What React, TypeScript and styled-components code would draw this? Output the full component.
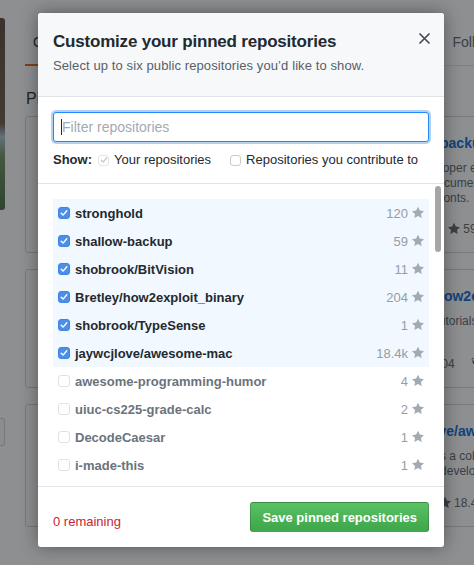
import React from "react"
import styled, { createGlobalStyle } from "styled-components"

interface Repo {
  name: string
  stars: string
  pinned: boolean
}

const repos: Repo[] = [
  { name: "stronghold", stars: "120", pinned: true },
  { name: "shallow-backup", stars: "59", pinned: true },
  { name: "shobrook/BitVision", stars: "11", pinned: true },
  { name: "Bretley/how2exploit_binary", stars: "204", pinned: true },
  { name: "shobrook/TypeSense", stars: "1", pinned: true },
  { name: "jaywcjlove/awesome-mac", stars: "18.4k", pinned: true },
  { name: "awesome-programming-humor", stars: "4", pinned: false },
  { name: "uiuc-cs225-grade-calc", stars: "2", pinned: false },
  { name: "DecodeCaesar", stars: "1", pinned: false },
  { name: "i-made-this", stars: "1", pinned: false },
  { name: "dotfiles", stars: "0", pinned: false },
  { name: "mac-setup", stars: "0", pinned: false },
]

const GlobalStyle = createGlobalStyle`
  html, body {
    margin: 0;
    padding: 0;
  }
  body {
    font-family: "Liberation Sans", Arial, sans-serif;
    color: #24292e;
    overflow: hidden;
  }
  * {
    box-sizing: border-box;
  }
`

/* ---------- background profile page ---------- */

const Page = styled.div`
  position: relative;
  width: 474px;
  height: 565px;
  overflow: hidden;
  background: #fff;
  display: flex;
  gap: 20px;
`

const Sidebar = styled.div`
  width: 5px;
  flex-shrink: 0;
  display: flex;
  flex-direction: column;
  padding-top: 18px;
`

const AvatarEdge = styled.div`
  height: 192px;
  border-radius: 0 3px 3px 0;
  background: linear-gradient(
    180deg,
    #5a4438 0%,
    #6b5346 55%,
    #a9c4cf 62%,
    #6f8f5a 72%,
    #3f6a38 100%
  );
`

const SideButton = styled.div`
  margin-top: 208px;
  height: 28px;
  border: 1px solid #d1d5da;
  border-left: none;
  border-radius: 0 3px 3px 0;
  background: #fafbfc;
`

const Main = styled.div`
  width: 700px;
  flex-shrink: 0;
  display: flex;
  flex-direction: column;
`

const TabBar = styled.nav`
  margin-top: 26px;
  display: flex;
  border-bottom: 1px solid #e1e4e8;
`

const Tab = styled.span<{ $active?: boolean }>`
  padding: 6px 8px 12px;
  margin-right: 12px;
  font-size: 14px;
  line-height: 20px;
  color: ${(p) => (p.$active ? "#24292e" : "#586069")};
  border-bottom: 2px solid ${(p) => (p.$active ? "#e36209" : "transparent")};
  margin-bottom: -1px;
  white-space: nowrap;
`

const Counter = styled.span`
  display: inline-block;
  margin-left: 4px;
  padding: 0 6px;
  font-size: 12px;
  line-height: 18px;
  border-radius: 20px;
  background: rgba(27, 31, 35, 0.08);
`

const PinnedTitle = styled.h2`
  margin: 23px 0 0 1px;
  font-size: 16px;
  font-weight: 400;
  line-height: 20px;
`

const CardGrid = styled.div`
  margin-top: 7px;
  display: grid;
  grid-template-columns: 326px 326px;
  grid-template-rows: 137px 119px 123px;
  gap: 16px;
`

const Card = styled.div`
  border: 1px solid #d1d5da;
  border-radius: 3px;
  padding: 16px;
  display: flex;
  flex-direction: column;
`

const CardTitle = styled.span`
  color: #0366d6;
  font-weight: 700;
  font-size: 14px;
  line-height: 20px;
  white-space: nowrap;
`

const CardDesc = styled.p`
  margin: 8px 0 0;
  font-size: 12px;
  line-height: 15px;
  color: #586069;
  white-space: nowrap;
`

const CardFooter = styled.div`
  margin-top: auto;
  display: flex;
  align-items: center;
  font-size: 12px;
  line-height: 12px;
  color: #586069;
  white-space: nowrap;
`

const FooterItem = styled.span`
  display: inline-flex;
  align-items: center;
  gap: 3px;
  margin-right: 16px;
`

const LangDot = styled.span<{ $color: string }>`
  width: 8px;
  height: 8px;
  border-radius: 50%;
  background: ${(p) => p.$color};
`

/* ---------- modal ---------- */

const Overlay = styled.div`
  position: absolute;
  inset: 0;
  background: rgba(27, 31, 35, 0.5);
  padding: 13px 0 0 38px;
`

const Modal = styled.div`
  position: relative;
  width: 406px;
  height: 534px;
  background: #fff;
  border-radius: 3px;
  box-shadow: 0 0 18px rgba(0, 0, 0, 0.4);
  display: flex;
  flex-direction: column;
  overflow: hidden;
`

const ModalHeader = styled.div`
  height: 84px;
  padding: 18px 15px 0;
  background: #f6f8fa;
  border-bottom: 1px solid #e1e4e8;
`

const ModalTitle = styled.h3`
  margin: 0;
  font-size: 17px;
  font-weight: 700;
  line-height: 22px;
  letter-spacing: -0.2px;
  color: #24292e;
`

const ModalSubtitle = styled.p`
  margin: 3px 0 0;
  font-size: 13px;
  line-height: 20px;
  letter-spacing: 0.1px;
  color: #586069;
`

const CloseButton = styled.button`
  position: absolute;
  top: 18px;
  right: 13px;
  width: 14px;
  height: 14px;
  padding: 0;
  border: none;
  background: none;
  color: #444d56;
  display: flex;
  align-items: center;
  justify-content: center;
`

const FilterSection = styled.div`
  padding: 15px 15px 0;
  height: 87px;
  border-bottom: 1px solid #e1e4e8;
`

const InputWrap = styled.div`
  position: relative;
  height: 30px;
`

const FilterInput = styled.input`
  width: 100%;
  height: 30px;
  padding: 0 8px;
  font-family: inherit;
  font-size: 14px;
  color: #24292e;
  border: 1px solid #2188ff;
  border-radius: 3px;
  outline: none;
  box-shadow: 0 0 0 2px rgba(3, 102, 214, 0.3);

  &::placeholder {
    color: #a3aab1;
  }
`

const Caret = styled.span`
  position: absolute;
  left: 8px;
  top: 7px;
  width: 1px;
  height: 16px;
  background: #24292e;
`

const ShowRow = styled.div`
  margin-top: 8px;
  display: flex;
  align-items: center;
  font-size: 13px;
  line-height: 20px;
  white-space: nowrap;
`

const ShowLabel = styled.strong`
  margin-right: 6px;
  flex-shrink: 0;
`

const Option = styled.label`
  display: inline-flex;
  align-items: center;
  gap: 4px;
  margin-right: 19px;
  flex-shrink: 0;
  white-space: nowrap;
`

const SmallBox = styled.span<{ $disabled?: boolean }>`
  width: 11px;
  height: 11px;
  flex-shrink: 0;
  border: 1px solid ${(p) => (p.$disabled ? "#e1e4e8" : "#c6cbd1")};
  border-radius: 3px;
  background: #fff;
  display: inline-flex;
  align-items: center;
  justify-content: center;
  margin-right: 1px;
`

const RepoList = styled.div`
  position: relative;
  flex: 1;
  overflow: hidden;
  padding: 15px 15px 0;
`

const ScrollThumb = styled.div`
  position: absolute;
  top: 2px;
  right: 3px;
  width: 6px;
  height: 66px;
  border-radius: 3px;
  background: rgba(0, 0, 0, 0.35);
`

const RepoRow = styled.div<{ $pinned: boolean }>`
  height: 28px;
  display: flex;
  align-items: center;
  padding: 0 5px;
  background: ${(p) => (p.$pinned ? "#f1f8ff" : "transparent")};
`

const RepoCheck = styled.span<{ $checked: boolean }>`
  width: 12px;
  height: 12px;
  margin-right: 5px;
  border-radius: 3px;
  display: inline-flex;
  align-items: center;
  justify-content: center;
  background: ${(p) => (p.$checked ? "#4b8fe8" : "#fff")};
  border: 1px solid ${(p) => (p.$checked ? "#3f84df" : "#dfe2e5")};
`

const RepoName = styled.span<{ $pinned: boolean }>`
  font-size: 13px;
  font-weight: 700;
  color: ${(p) => (p.$pinned ? "#24292e" : "#6a737d")};
`

const StarCount = styled.span`
  margin-left: auto;
  display: inline-flex;
  align-items: center;
  gap: 4px;
  font-size: 13px;
  color: #959da5;
`

const ModalFooter = styled.div`
  height: 61px;
  padding: 0 15px;
  border-top: 1px solid #e1e4e8;
  display: flex;
  align-items: center;
  justify-content: space-between;
`

const Remaining = styled.span`
  margin-top: 8px;
  font-size: 13px;
  color: #cb2431;
`

const SaveButton = styled.button`
  height: 30px;
  padding: 0 11px;
  font-family: inherit;
  font-size: 13px;
  font-weight: 700;
  color: #fff;
  border: 1px solid rgba(27, 31, 35, 0.2);
  border-radius: 3px;
  background: linear-gradient(-180deg, #5ac165 0%, #40a94c 90%);
`

/* ---------- icons ---------- */

const StarIcon = ({ size = 12, color = "#a3aab1" }: { size?: number; color?: string }) => (
  <svg width={size} height={size * (16 / 14)} viewBox="0 0 14 16" fill={color}>
    <path d="M14 6l-4.9-.64L7 1 4.9 5.36 0 6l3.6 3.26L2.67 14 7 11.67 11.33 14l-.93-4.74L14 6z" />
  </svg>
)

const ForkIcon = () => (
  <svg width="10" height="14" viewBox="0 0 10 16" fill="#586069">
    <path d="M8 1a1.993 1.993 0 0 0-1 3.72V6L5 8 3 6V4.72A1.993 1.993 0 0 0 2 1a1.993 1.993 0 0 0-1 3.72V6.5l3 3v1.78A1.993 1.993 0 0 0 5 15a1.993 1.993 0 0 0 1-3.72V9.5l3-3V4.72A1.993 1.993 0 0 0 8 1zM2 4.2C1.340 4.2.8 3.65.8 3c0-.65.55-1.2 1.2-1.2.65 0 1.2.55 1.2 1.2 0 .65-.55 1.2-1.2 1.2zm3 10c-.66 0-1.2-.55-1.2-1.2 0-.65.55-1.2 1.2-1.2.65 0 1.2.55 1.2 1.2 0 .65-.55 1.2-1.2 1.2zm3-10c-.66 0-1.2-.55-1.2-1.2 0-.65.55-1.2 1.2-1.2.65 0 1.2.55 1.2 1.2 0 .65-.55 1.2-1.2 1.2z" />
  </svg>
)

const CheckMark = ({ color }: { color: string }) => (
  <svg width="8" height="8" viewBox="0 0 8 8" fill="none">
    <path d="M1.2 4.2l1.9 1.9L6.8 1.8" stroke={color} strokeWidth="1.4" strokeLinecap="round" strokeLinejoin="round" />
  </svg>
)

const CloseIcon = () => (
  <svg width="11" height="11" viewBox="0 0 11 11">
    <path d="M1 1l9 9M10 1l-9 9" stroke="currentColor" strokeWidth="1.7" strokeLinecap="round" />
  </svg>
)

export default function App() {
  return (
    <>
      <GlobalStyle />
      <Page>
        <Sidebar>
          <AvatarEdge />
          <SideButton />
        </Sidebar>

        <Main>
          <TabBar>
            <Tab $active>Overview</Tab>
            <Tab>
              Repositories<Counter>24</Counter>
            </Tab>
            <Tab>
              Projects<Counter>0</Counter>
            </Tab>
            <Tab>
              Stars<Counter>243</Counter>
            </Tab>
            <Tab>
              Followers<Counter>36</Counter>
            </Tab>
          </TabBar>

          <PinnedTitle>Pinned</PinnedTitle>

          <CardGrid>
            <Card>
              <CardTitle>stronghold</CardTitle>
              <CardDesc>
                Easily configure macOS security settings
                <br />
                from the terminal.
              </CardDesc>
              <CardFooter>
                <FooterItem>
                  <LangDot $color="#3572A5" />
                  Python
                </FooterItem>
                <FooterItem>
                  <StarIcon color="#586069" />
                  120
                </FooterItem>
              </CardFooter>
            </Card>
            <Card>
              <CardTitle>shallow-backup</CardTitle>
              <CardDesc>
                Easy developer environment backups.
                <br />
                Dotfiles, documents, packages and
                <br />
                apps, and fonts.
              </CardDesc>
              <CardFooter>
                <FooterItem>
                  <LangDot $color="#3572A5" />
                  Python
                </FooterItem>
                <FooterItem>
                  <StarIcon color="#586069" />
                  59
                </FooterItem>
              </CardFooter>
            </Card>
            <Card>
              <CardTitle>shobrook/BitVision</CardTitle>
              <CardDesc>Terminal dashboard for trading Bitcoin.</CardDesc>
              <CardFooter>
                <FooterItem>
                  <LangDot $color="#3572A5" />
                  Python
                </FooterItem>
                <FooterItem>
                  <StarIcon color="#586069" />
                  11
                </FooterItem>
              </CardFooter>
            </Card>
            <Card>
              <CardTitle>Bretley/how2exploit_binary</CardTitle>
              <CardDesc>Beginner tutorials on binary exploitation.</CardDesc>
              <CardFooter>
                <FooterItem>
                  <LangDot $color="#555555" />C
                </FooterItem>
                <FooterItem>
                  <StarIcon color="#586069" />
                  204
                </FooterItem>
                <FooterItem>
                  <ForkIcon />
                  41
                </FooterItem>
              </CardFooter>
            </Card>
            <Card>
              <CardTitle>shobrook/TypeSense</CardTitle>
              <CardDesc>
                Autocomplete for the web.
                <br />
                Type less, say more.
              </CardDesc>
              <CardFooter>
                <FooterItem>
                  <LangDot $color="#f1e05a" />
                  JavaScript
                </FooterItem>
                <FooterItem>
                  <StarIcon color="#586069" />1
                </FooterItem>
              </CardFooter>
            </Card>
            <Card>
              <CardTitle>jaywcjlove/awesome-mac</CardTitle>
              <CardDesc>
                This repo is a collection of awesome Mac apps
                <br />
                tooling for developers and designers.
              </CardDesc>
              <CardFooter>
                <FooterItem>
                  <LangDot $color="#701516" />
                  Ruby
                </FooterItem>
                <FooterItem>
                  <StarIcon color="#586069" />
                  18.4k
                </FooterItem>
              </CardFooter>
            </Card>
          </CardGrid>
        </Main>

        <Overlay>
          <Modal>
            <ModalHeader>
              <ModalTitle>Customize your pinned repositories</ModalTitle>
              <ModalSubtitle>Select up to six public repositories you’d like to show.</ModalSubtitle>
            </ModalHeader>
            <CloseButton aria-label="Close">
              <CloseIcon />
            </CloseButton>

            <FilterSection>
              <InputWrap>
                <FilterInput type="text" placeholder="Filter repositories" />
                <Caret />
              </InputWrap>
              <ShowRow>
                <ShowLabel>Show:</ShowLabel>
                <Option>
                  <SmallBox $disabled>
                    <CheckMark color="#c6cbd1" />
                  </SmallBox>
                  Your repositories
                </Option>
                <Option>
                  <SmallBox />
                  Repositories you contribute to
                </Option>
              </ShowRow>
            </FilterSection>

            <RepoList>
              {repos.map((repo) => (
                <RepoRow key={repo.name} $pinned={repo.pinned}>
                  <RepoCheck $checked={repo.pinned}>
                    {repo.pinned && <CheckMark color="#fff" />}
                  </RepoCheck>
                  <RepoName $pinned={repo.pinned}>{repo.name}</RepoName>
                  <StarCount>
                    {repo.stars}
                    <StarIcon />
                  </StarCount>
                </RepoRow>
              ))}
              <ScrollThumb />
            </RepoList>

            <ModalFooter>
              <Remaining>0 remaining</Remaining>
              <SaveButton>Save pinned repositories</SaveButton>
            </ModalFooter>
          </Modal>
        </Overlay>
      </Page>
    </>
  )
}
